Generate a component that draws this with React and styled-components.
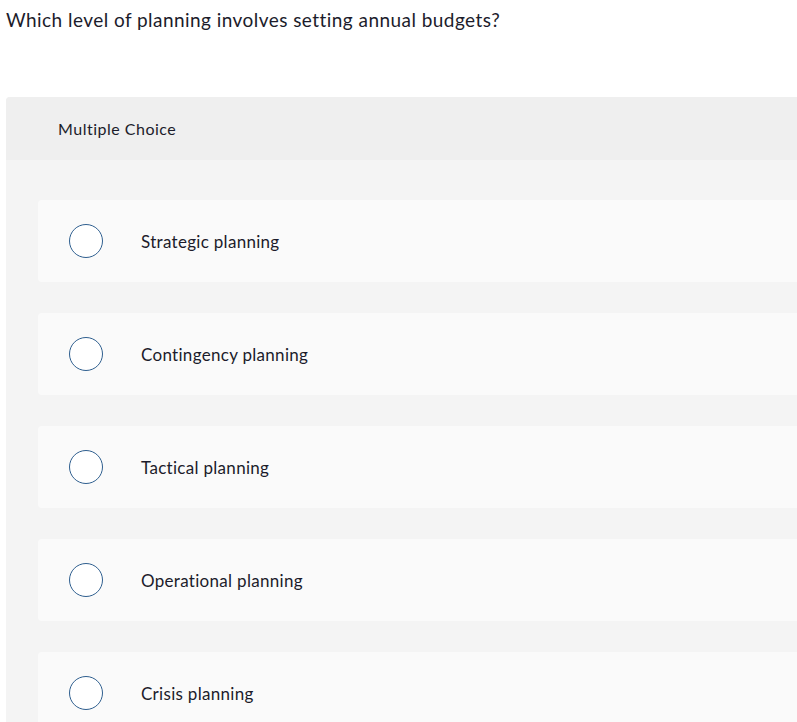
import React from "react";
import styled, { createGlobalStyle } from "styled-components";

const Global = createGlobalStyle`
  html, body {
    margin: 0;
    padding: 0;
    background: #ffffff;
    overflow: hidden;
  }
  body {
    font-family: Lato, "Open Sans", sans-serif;
    color: #1c1c2b;
  }
`;

const Page = styled.div`
  padding: 8px 0 0 6px;
  width: 840px;
`;

const Question = styled.h1`
  margin: 0;
  font-size: 19px;
  letter-spacing: 0.45px;
  font-weight: 400;
  line-height: 24px;
  color: #1c1c2b;
`;

const Panel = styled.div`
  margin-top: 65px;
  background: #f4f4f4;
  border-radius: 4px 0 0 0;
  overflow: hidden;
`;

const Header = styled.div`
  height: 63px;
  display: flex;
  align-items: center;
  padding-left: 52px;
  background: #efefef;
  font-size: 16px;
  letter-spacing: 0.5px;
  color: #1c1c2b;
`;

const Choices = styled.div`
  display: flex;
  flex-direction: column;
  gap: 31px;
  padding: 40px 0 40px 32px;
`;

const Choice = styled.label`
  display: flex;
  align-items: center;
  height: 82px;
  background: #fafafa;
  border-radius: 4px;
  padding-left: 31px;
  cursor: pointer;
`;

const Radio = styled.span`
  width: 32px;
  height: 32px;
  border: 1.5px solid #2f5f8f;
  border-radius: 50%;
  background: #ffffff;
  flex-shrink: 0;
`;

const Label = styled.span`
  margin-left: 38px;
  font-size: 17px;
  letter-spacing: 0.3px;
  color: #1c1c2b;
`;

const options = [
  "Strategic planning",
  "Contingency planning",
  "Tactical planning",
  "Operational planning",
  "Crisis planning",
];

export default function App() {
  return (
    <>
      <Global />
      <Page>
        <Question>Which level of planning involves setting annual budgets?</Question>
        <Panel>
          <Header>Multiple Choice</Header>
          <Choices>
            {options.map((o) => (
              <Choice key={o}>
                <Radio />
                <Label>{o}</Label>
              </Choice>
            ))}
          </Choices>
        </Panel>
      </Page>
    </>
  );
}
